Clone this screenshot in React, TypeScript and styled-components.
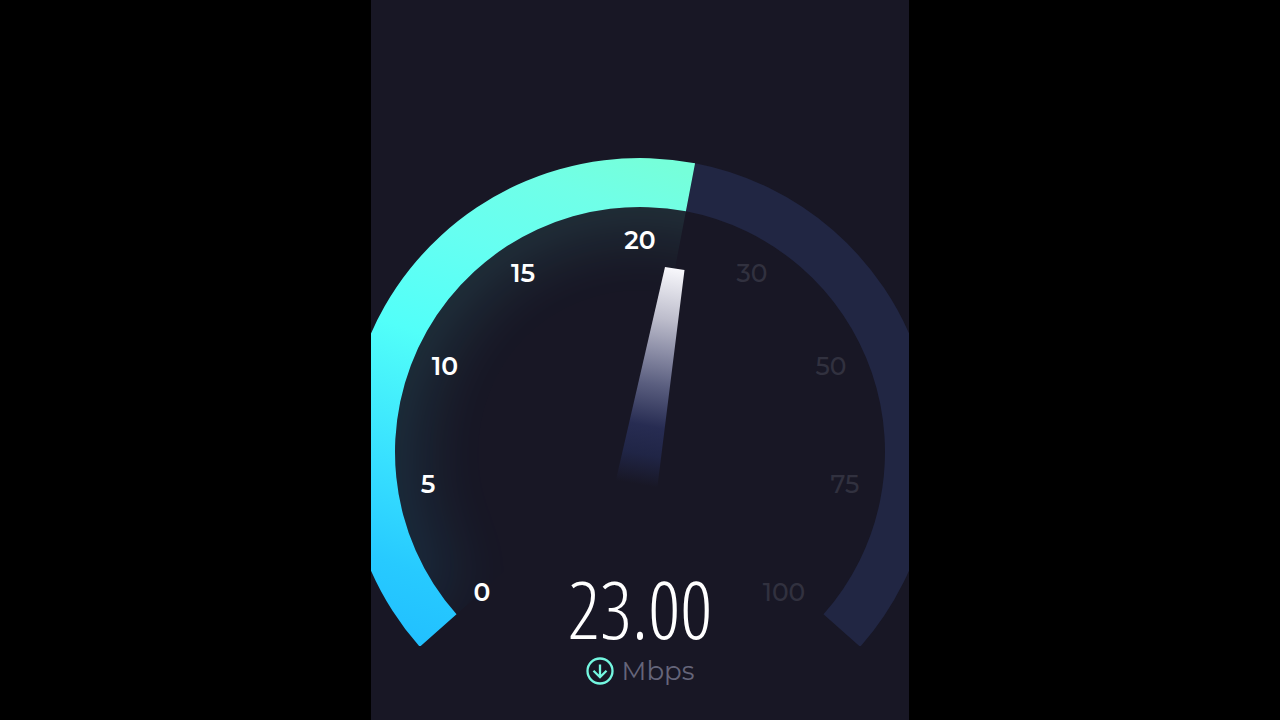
import React from "react";
import styled, { createGlobalStyle } from "styled-components";

const colors = {
  panel: "#181725",
  track: "#212643",
  label: "#ffffff",
  labelDim: "#31313f",
  unit: "#65657a",
  accent: "#74f7e0",
};

const GlobalStyle = createGlobalStyle`
  body {
    margin: 0;
    background: #000;
    font-family: Montserrat, Inter, sans-serif;
  }
`;

const Page = styled.div`
  display: flex;
  justify-content: center;
  min-height: 100vh;
`;

const Panel = styled.main`
  box-sizing: border-box;
  width: 42%;
  min-width: 320px;
  padding: 158px 0 32px;
  overflow: hidden;
  background: ${colors.panel};
`;

const Gauge = styled.section`
  display: grid;
  grid-template-columns: 1fr;
  justify-items: center;
`;

const DialFrame = styled.div`
  grid-area: 1 / 1;
  display: flex;
  justify-content: center;
  width: 100%;
  min-width: 0;
`;

const Dial = styled.svg`
  flex: none;
  width: 588px;
  height: 488px;
`;

const DialLabel = styled.text<{ $reached: boolean }>`
  fill: ${(p) => (p.$reached ? colors.label : colors.labelDim)};
  font-size: 25px;
  font-weight: ${(p) => (p.$reached ? 600 : 500)};
  text-anchor: middle;
`;

const Readout = styled.div`
  grid-area: 1 / 1;
  display: flex;
  flex-direction: column;
  align-items: center;
  gap: 6px;
  padding-top: 410px;
`;

const Speed = styled.output`
  color: #fff;
  font-family: "Open Sans Condensed Light", "Roboto Condensed", sans-serif;
  font-size: 80px;
  font-weight: 300;
  line-height: 80px;
`;

const Unit = styled.div`
  display: flex;
  align-items: center;
  gap: 8px;
  color: ${colors.unit};
  font-size: 26px;
  line-height: 34px;
`;

const UnitIcon = styled.svg`
  width: 28px;
  height: 28px;
  fill: none;
  stroke: ${colors.accent};
  stroke-width: 2.3;
`;

const CX = 294;
const CY = 294;
const OUTER = 294;
const INNER = 245;
const START = -131.5;
const VALUE = 10.8;
const END = 131.5;

const point = (angle: number, r: number) => {
  const a = (angle * Math.PI) / 180;
  return `${(CX + r * Math.sin(a)).toFixed(2)} ${(CY - r * Math.cos(a)).toFixed(2)}`;
};

const ring = (from: number, to: number, inner: number, outer: number) => {
  const large = to - from > 180 ? 1 : 0;
  return [
    `M${point(from, outer)}`,
    `A${outer} ${outer} 0 ${large} 1 ${point(to, outer)}`,
    `L${point(to, inner)}`,
    `A${inner} ${inner} 0 ${large} 0 ${point(from, inner)}`,
    "Z",
  ].join(" ");
};

const marks = [
  { value: 0, x: 136, y: 443 },
  { value: 5, x: 82, y: 335 },
  { value: 10, x: 99, y: 217 },
  { value: 15, x: 177, y: 124 },
  { value: 20, x: 294, y: 91 },
  { value: 30, x: 406, y: 124 },
  { value: 50, x: 485, y: 217 },
  { value: 75, x: 499, y: 335 },
  { value: 100, x: 438, y: 443 },
];

const speed = 23;

export default function App() {
  return (
    <>
      <GlobalStyle />
      <Page>
        <Panel>
          <Gauge aria-label="Download speed">
            <DialFrame>
              <Dial viewBox="0 0 588 488">
                <defs>
                  <linearGradient id="progress" gradientUnits="userSpaceOnUse" x1="134" y1="502" x2="304" y2="2">
                    <stop offset="0" stopColor="#22c1ff" />
                    <stop offset="0.12" stopColor="#27caff" />
                    <stop offset="0.3" stopColor="#38e0ff" />
                    <stop offset="0.55" stopColor="#52fff9" />
                    <stop offset="0.75" stopColor="#66fff1" />
                    <stop offset="0.9" stopColor="#70ffe7" />
                    <stop offset="1" stopColor="#76ffda" />
                  </linearGradient>
                  <filter id="soften" x="-30%" y="-30%" width="160%" height="160%" colorInterpolationFilters="sRGB">
                    <feGaussianBlur stdDeviation="32" />
                  </filter>
                  <clipPath id="swept">
                    <path d={ring(START, VALUE, 100, INNER)} />
                  </clipPath>
                  <linearGradient id="needle" gradientUnits="userSpaceOnUse" x1="328" y1="110" x2="290" y2="326">
                    <stop offset="0" stopColor="#f8f8fc" />
                    <stop offset="0.24" stopColor="#bcbccb" />
                    <stop offset="0.39" stopColor="#8b8da6" />
                    <stop offset="0.54" stopColor="#5a5e7f" />
                    <stop offset="0.73" stopColor="#272c52" />
                    <stop offset="0.86" stopColor="#202546" />
                    <stop offset="1" stopColor="#202546" stopOpacity="0" />
                  </linearGradient>
                </defs>
                <g clipPath="url(#swept)">
                  <path
                    d={ring(START + 5, VALUE + 20, INNER - 26, OUTER + 30)}
                    fill="url(#progress)"
                    filter="url(#soften)"
                    opacity="0.11"
                  />
                </g>
                <path d={ring(VALUE, END, INNER, OUTER)} fill={colors.track} />
                <path d={ring(START, VALUE, INNER, OUTER)} fill="url(#progress)" />
                <path d="M319 109 L338.500 112 L311 332 L269 326 Z" fill="url(#needle)" />
                {marks.map((m) => (
                  <DialLabel key={m.value} x={m.x} y={m.y} $reached={m.value <= speed}>
                    {m.value}
                  </DialLabel>
                ))}
              </Dial>
            </DialFrame>
            <Readout>
              <Speed>{speed.toFixed(2)}</Speed>
              <Unit>
                <UnitIcon viewBox="0 0 28 28" aria-hidden="true">
                  <circle cx="14" cy="14" r="12.500" />
                  <path d="M14 7.500V20M7.500 13.700l6.500 6.500 6.500-6.500" />
                </UnitIcon>
                Mbps
              </Unit>
            </Readout>
          </Gauge>
        </Panel>
      </Page>
    </>
  );
}
